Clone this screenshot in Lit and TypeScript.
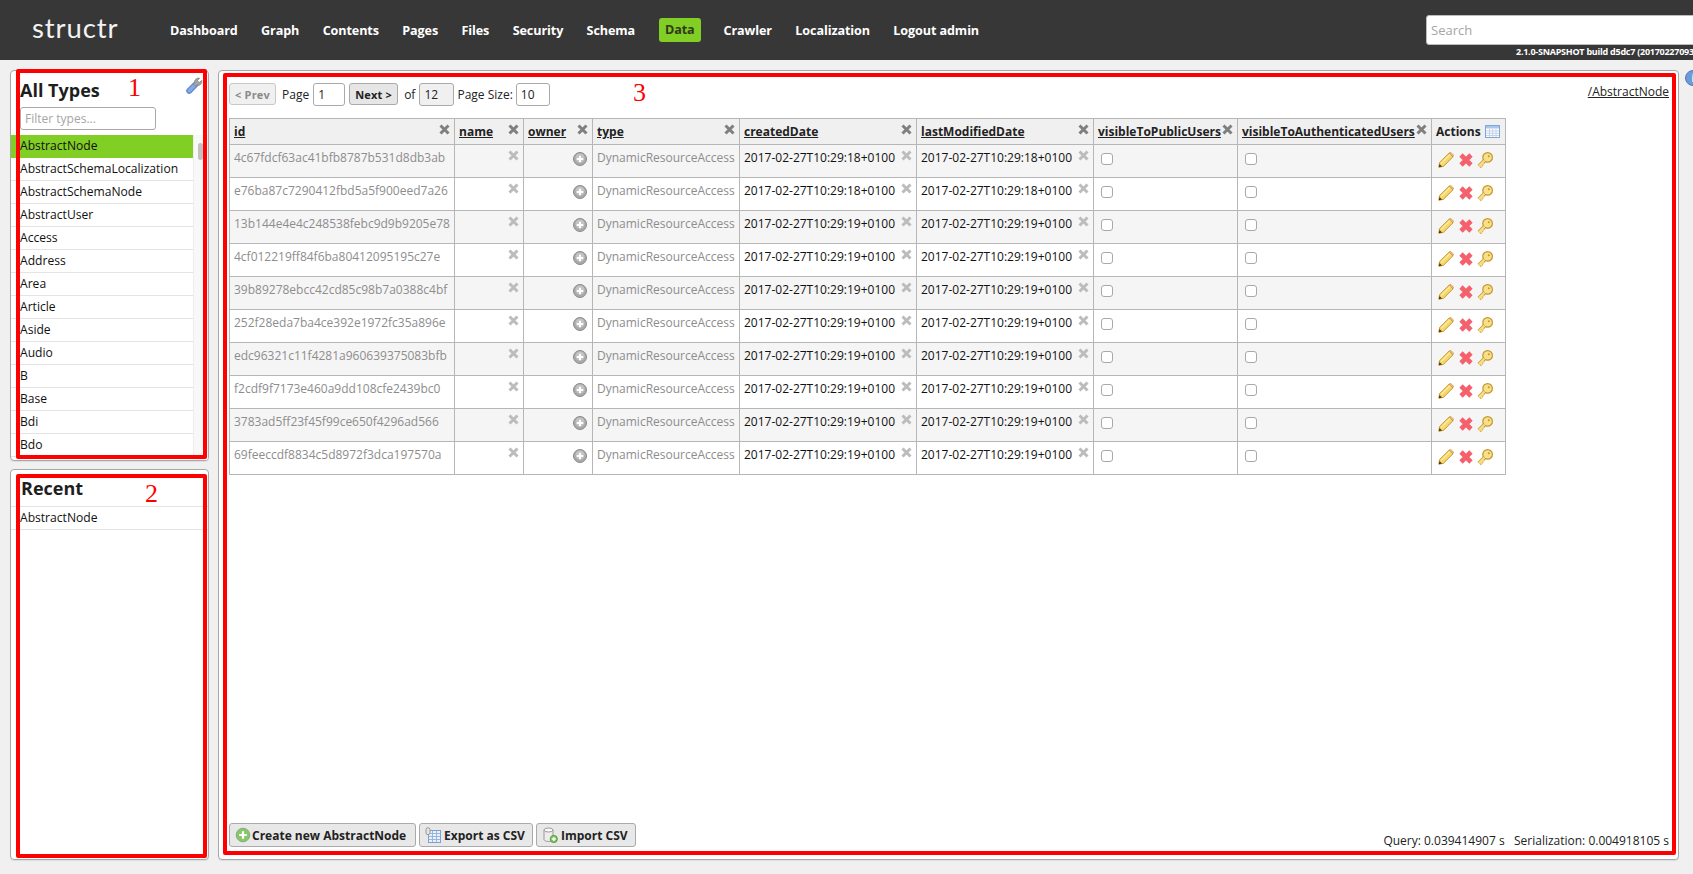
import { LitElement, html, css } from "lit";
import { customElement } from "lit/decorators.js";

const NAV = ["Dashboard", "Graph", "Contents", "Pages", "Files", "Security", "Schema", "Data", "Crawler", "Localization", "Logout admin"];
const TYPES = ["AbstractNode", "AbstractSchemaLocalization", "AbstractSchemaNode", "AbstractUser", "Access", "Address", "Area", "Article", "Aside", "Audio", "B", "Base", "Bdi", "Bdo"];
const IDS = [
  "4c67fdcf63ac41bfb8787b531d8db3ab",
  "e76ba87c7290412fbd5a5f900eed7a26",
  "13b144e4e4c248538febc9d9b9205e78",
  "4cf012219ff84f6ba80412095195c27e",
  "39b89278ebcc42cd85c98b7a0388c4bf",
  "252f28eda7ba4ce392e1972fc35a896e",
  "edc96321c11f4281a960639375083bfb",
  "f2cdf9f7173e460a9dd108cfe2439bc0",
  "3783ad5ff23f45f99ce650f4296ad566",
  "69feeccdf8834c5d8972f3dca197570a",
];
const COLS: [string, number][] = [
  ["id", 225], ["name", 69], ["owner", 69], ["type", 147], ["createdDate", 177],
  ["lastModifiedDate", 177], ["visibleToPublicUsers", 144], ["visibleToAuthenticatedUsers", 194],
];

const xIcon = (cls: string) => html`<svg class="x ${cls}" viewBox="0 0 11 11"><path d="M1.5 1.5 9.5 9.5M9.5 1.5 1.5 9.5" fill="none" stroke="currentColor" stroke-width="3"/></svg>`;
const plusIcon = html`<svg class="plus" viewBox="0 0 14 14"><circle cx="7" cy="7" r="6.5" fill="#a9a9a9" stroke="#8c8c8c"/><circle cx="7" cy="6" r="4.5" fill="#c4c4c4"/><path d="M7 3.8v6.4M3.8 7h6.4" stroke="#fff" stroke-width="2"/></svg>`;
const pencil = html`<svg class="ic16" viewBox="0 0 16 16"><path d="M.8 15.2 1.6 10.6 11.2 1 15 4.8 5.4 14.4Z" fill="#f6d768" stroke="#c18f2c" stroke-width=".9"/><path d="M3.2 11.4 12.4 2.4" stroke="#fdf0b0" stroke-width="1.1"/><path d="M11.2 1 12.8.4 15.6 3.2 15 4.8Z" fill="#f0b98d" stroke="#c18f2c" stroke-width=".6"/><path d="M.8 15.2 1.5 12 4 14.5Z" fill="#4d3418"/></svg>`;
const cross = html`<svg class="ic14" viewBox="0 0 14 14"><path d="M2 2 12 12M12 2 2 12" stroke="#f4606b" stroke-width="4.6"/></svg>`;
const key = html`<svg class="ic16" viewBox="0 0 16 16"><g fill="none"><path d="M7.5 8.5 1.8 14.2M3.2 12.8 5.2 14.8M5 11 6.6 12.6" stroke="#c6952c" stroke-width="3.6"/><circle cx="10.6" cy="5.4" r="4.2" fill="#c6952c" stroke="#c6952c" stroke-width="2.4"/><path d="M7.5 8.5 1.8 14.2M3.2 12.8 5.2 14.8M5 11 6.6 12.6" stroke="#f8e08a" stroke-width="2"/><circle cx="10.6" cy="5.4" r="4.2" fill="#f8e08a"/><circle cx="11.8" cy="4.2" r="1" fill="#c6952c"/></g></svg>`;
const wrench = html`<svg class="wrench" viewBox="0 0 17 17"><path d="M3.2 13.8 9.5 7.5" stroke="#5f86cc" stroke-width="6" stroke-linecap="round"/><path d="M3.2 13.8 9.5 7.5" stroke="#86a9e6" stroke-width="3.6" stroke-linecap="round"/><path d="M8.5 5.5C8.5 2.5 11 .6 13.6 1.2L11.4 3.6 13.2 5.6 15.8 3.4C16.4 6.4 14 8.8 11.2 8.2L9.6 9.2 7.6 7.2Z" fill="#a4a4a4" stroke="#7d7d7d" stroke-width=".7"/></svg>`;
const tableIcon = html`<svg class="tbl" viewBox="0 0 15 13"><rect x=".5" y=".5" width="14" height="12" fill="#fff" stroke="#7ea6dc"/><rect x="1" y="1" width="13" height="2.5" fill="#a9c6ee"/><path d="M1 6h13M1 8.3h13M1 10.5h13M4.5 4v8M7.7 4v8M11 4v8" stroke="#b9c9e0" stroke-width=".8"/></svg>`;
const createIcon = html`<svg class="btn-ic" viewBox="0 0 16 16"><circle cx="8" cy="8" r="6.8" fill="#85c964" stroke="#8aa883"/><path d="M8 4.2v7.6M4.2 8h7.6" stroke="#fff" stroke-width="2.2"/></svg>`;
const exportIcon = html`<svg class="btn-ic" viewBox="0 0 16 16"><rect x="3.5" y="3.5" width="12" height="12" fill="#eaf1fb" stroke="#7ea0cc"/><path d="M3.5 6.5h12M3.5 9.5h12M3.5 12.5h12M7.5 4v11M11.5 4v11" stroke="#8fb0da" stroke-width=".9"/><rect x="1" y=".7" width="4" height="7" rx="2" fill="#e4e4e4" stroke="#999"/></svg>`;
const importIcon = html`<svg class="btn-ic" viewBox="0 0 16 16"><path d="M2 3v9.5c0 1 2 2 4.5 2s4.5-1 4.5-2V3Z" fill="#ededed" stroke="#999"/><ellipse cx="6.5" cy="3" rx="4.5" ry="2" fill="#fafafa" stroke="#999"/><circle cx="11.8" cy="12" r="3.6" fill="#7cc35a" stroke="#5f9d43"/><path d="M11.8 10v4M9.8 12h4" stroke="#fff" stroke-width="1.3"/></svg>`;

@customElement("app-root")
export class AppRoot extends LitElement {
  static styles = css`
    :host { display: block; position: relative; width: 1693px; height: 874px; overflow: hidden; background: #f0f0f0; font-family: "Open Sans", "DejaVu Sans", sans-serif; font-size: 12px; color: #1a1a1a; }
    * { box-sizing: border-box; }
    header { height: 60px; background: #373737; display: flex; align-items: flex-start; overflow: hidden; }
    .logo { width: 170px; flex: none; padding: 10px 0 0 32px; font-family: Lato, sans-serif; font-weight: 400; font-size: 27.5px; line-height: 36px; letter-spacing: .9px; color: #f2f2f2; }
    nav { display: flex; align-items: center; height: 24px; margin-top: 18px; flex: none; width: 1256px; }
    nav a { font-weight: 700; font-size: 12.6px; color: #fff; margin-right: 23.4px; letter-spacing: -.1px; white-space: nowrap; }
    nav a.active { background: #81ce25; color: #2f3a1c; border-radius: 3px; padding: 0 6.5px; height: 24px; line-height: 24px; margin-right: 22.4px; }
    .search { flex: none; width: 267px; padding-top: 15px; overflow: hidden; }
    .search input { display: block; width: 300px; height: 30px; border: 1px solid #bbb; border-radius: 3px; padding: 0 4px; font: 13px "Open Sans", sans-serif; background: #fff; }
    .search input::placeholder, .filter::placeholder { color: #a5a5a5; opacity: 1; }
    .version { font-size: 9px; font-weight: 700; color: #fff; white-space: nowrap; padding-left: 90px; line-height: 14px; letter-spacing: -.25px; }
    .body { display: flex; height: 814px; padding: 10px 0 0 10px; }
    .side { flex: none; width: 199px; display: flex; flex-direction: column; gap: 8px; height: 790px; }
    .panel { background: #fff; border: 1px solid #a8a8a8; border-radius: 4px; box-shadow: 0 1px 1px rgba(0,0,0,.08); }
    .types { height: 391px; display: flex; flex-direction: column; overflow: hidden; }
    .recent { flex: 1; }
    .types-head { height: 64px; flex: none; position: relative; padding: 0 0 0 9px; }
    h2 { margin: 0; font-weight: 700; font-size: 18px; color: #1e1e1e; line-height: 27px; }
    .types-head h2 { padding-top: 1px; line-height: 26px; height: 36px; display: flex; align-items: center; }
    .wrench { position: absolute; right: 5px; top: 6px; width: 17px; height: 17px; }
    .filter { display: block; width: 136px; height: 23px; border: 1px solid #aaa; border-radius: 3px; padding: 0 4px; font: 12px "Open Sans", sans-serif; background: #fff; }
    .list-wrap { flex: 1; display: flex; min-height: 0; }
    ul { list-style: none; margin: 0; padding: 0; }
    .list-wrap ul { flex: 1; min-width: 0; }
    li { height: 23px; line-height: 22px; padding-left: 9px; border-bottom: 1px solid #e4e4e4; font-size: 12.1px; color: #111; }
    li.active { background: #81ce25; border-bottom-color: #81ce25; }
    .track { width: 15px; flex: none; background: #f8f8f8; border-left: 1px solid #ededed; padding: 8px 0 0 4px; }
    .thumb { width: 5px; height: 17px; background: #c2c2c2; border-radius: 3px; }
    .recent h2 { height: 37px; padding: 5px 0 0 10px; border-bottom: 1px solid #e4e4e4; line-height: 27px; }
    .main { flex: none; width: 1461px; height: 790px; margin-left: 9px; padding: 12px 9px 12px 10px; display: flex; flex-direction: column; }
    .tools { display: flex; align-items: flex-start; height: 23px; margin-bottom: 12px; font-size: 12px; }
    .tools span { line-height: 23px; color: #222; }
    .tools .path { margin-left: auto; text-decoration: underline; color: #222; font-size: 12px; line-height: 18px; }
    .pbtn { height: 22px; border: 1px solid #aaa; border-radius: 3px; background: #e6e6e6; font: 700 11px "Open Sans", sans-serif; color: #222; padding: 0; letter-spacing: .2px; }
    .pbtn.prev { width: 47px; color: #8a8a8a; background: #f0f0f0; border-color: #c8c8c8; margin-right: 6px; }
    .pbtn.next { width: 49px; margin: 0 6px 0 4px; }
    .pinput { height: 23px; border: 1px solid #aaa; border-radius: 3px; padding: 0 4px; font: 12px "Open Sans", sans-serif; color: #222; background: #fff; }
    .p1 { width: 32px; margin-left: 4px; }
    .p2 { width: 35px; margin: 0 3px 0 4px; background: #f0f0f0; }
    .p3 { width: 34px; margin-left: 3px; }
    table { border-collapse: collapse; table-layout: fixed; width: 1276px; }
    th, td { border: 1px solid #b6b6b6; position: relative; padding: 0; }
    th { height: 26px; background: #f0f0f0; text-align: left; padding: 0 4px 0 4px; font-size: 12px; font-weight: 700; color: #222; white-space: nowrap; overflow: visible; }
    th u { text-underline-offset: 1px; }
    td { height: 33px; vertical-align: top; padding: 4px 0 0 4px; line-height: 18px; color: #8d8d8d; font-size: 12px; white-space: nowrap; overflow: hidden; }
    tr.odd td { background: #f5f5f5; }
    td.dark { color: #111; }
    .x { position: absolute; width: 11px; height: 11px; right: 4px; }
    .x.h { top: 5px; color: #7f7f7f; }
    .x.b { top: 5px; color: #bcbcbc; }
    .plus { position: absolute; right: 5px; top: 7px; width: 14px; height: 14px; }
    td .cb { appearance: none; -webkit-appearance: none; display: block; margin: 4px 0 0 3px; width: 12px; height: 12px; border: 1px solid #a9a9a9; border-radius: 3px; background: #fff; }
    .acts { display: flex; align-items: center; gap: 5px; padding: 3px 0 0 2px; }
    .ic16 { width: 16px; height: 16px; flex: none; }
    .ic14 { width: 14px; height: 14px; flex: none; margin-right: -1px; }
    th.act { padding-right: 0; }
    .act-in { display: flex; align-items: center; gap: 4px; }
    .tbl { width: 15px; height: 13px; flex: none; }
    .foot { margin-top: auto; display: flex; align-items: flex-end; gap: 3px; }
    .btn { height: 24px; border: 1px solid #aaa; border-radius: 3px; background: #e8e8e8; display: flex; align-items: center; gap: 3px; padding: 0 0 0 5px; font: 700 12px "Open Sans", sans-serif; color: #222; white-space: nowrap; flex: none; }
    .b1 { width: 187px; gap: 1px; } .b2 { width: 114px; } .b3 { width: 100px; }
    .btn-ic { width: 16px; height: 16px; flex: none; }
    .stats { margin-left: auto; margin-bottom: -3px; font-size: 12px; color: #222; white-space: pre; line-height: 18px; }
    .info { flex: none; margin-left: 6px; width: 16px; height: 16px; border-radius: 50%; background: #6b9bd8; border: 1px solid #4c7cb9; color: #fff; font-size: 10px; font-weight: 700; text-align: center; line-height: 14px; }
    .mark { position: absolute; border: 4px solid #fe0000; border-radius: 2px; pointer-events: none; }
    .m1 { left: 16px; top: 69px; width: 191px; height: 390px; }
    .m2 { left: 16px; top: 474px; width: 191px; height: 384px; }
    .m3 { left: 223px; top: 73px; width: 1453px; height: 782px; }
    .num { position: absolute; font-family: "Liberation Serif", serif; color: #fe0000; font-size: 26px; line-height: 26px; pointer-events: none; }
    .n1 { left: 128px; top: 75px; }
    .n2 { left: 145px; top: 481px; }
    .n3 { left: 633px; top: 80px; }
  `;

  render() {
    return html`
      <header>
        <div class="logo">structr</div>
        <nav>${NAV.map((n) => html`<a class=${n === "Data" ? "active" : ""}>${n}</a>`)}</nav>
        <div class="search">
          <input placeholder="Search" />
          <div class="version">2.1.0-SNAPSHOT build d5dc7 (201702270932)</div>
        </div>
      </header>
      <div class="body">
        <div class="side">
          <section class="panel types">
            <div class="types-head">
              <h2>All Types</h2>
              ${wrench}
              <input class="filter" placeholder="Filter types..." />
            </div>
            <div class="list-wrap">
              <ul>${TYPES.map((t, i) => html`<li class=${i === 0 ? "active" : ""}>${t}</li>`)}</ul>
              <div class="track"><div class="thumb"></div></div>
            </div>
          </section>
          <section class="panel recent">
            <h2>Recent</h2>
            <ul><li>AbstractNode</li></ul>
          </section>
        </div>
        <main class="panel main">
          <div class="tools">
            <button class="pbtn prev">&lt; Prev</button>
            <span>Page</span>
            <input class="pinput p1" value="1" />
            <button class="pbtn next">Next &gt;</button>
            <span>of</span>
            <input class="pinput p2" value="12" disabled />
            <span>Page Size:</span>
            <input class="pinput p3" value="10" />
            <span class="path">/AbstractNode</span>
          </div>
          <table>
            <colgroup>
              ${COLS.map(([, w]) => html`<col style="width:${w}px" />`)}
              <col style="width:74px" />
            </colgroup>
            <thead>
              <tr>
                ${COLS.map(([c]) => html`<th><u>${c}</u>${xIcon("h")}</th>`)}
                <th class="act"><div class="act-in">Actions ${tableIcon}</div></th>
              </tr>
            </thead>
            <tbody>
              ${IDS.map((id, i) => {
                const d = `2017-02-27T10:29:${i < 2 ? 18 : 19}+0100`;
                return html`<tr class=${i % 2 === 0 ? "odd" : ""}>
                  <td>${id}</td>
                  <td>${xIcon("b")}</td>
                  <td>${plusIcon}</td>
                  <td>DynamicResourceAccess</td>
                  <td class="dark">${d}${xIcon("b")}</td>
                  <td class="dark">${d}${xIcon("b")}</td>
                  <td><input class="cb" type="checkbox" /></td>
                  <td><input class="cb" type="checkbox" /></td>
                  <td><div class="acts">${pencil}${cross}${key}</div></td>
                </tr>`;
              })}
            </tbody>
          </table>
          <div class="foot">
            <button class="btn b1">${createIcon}Create new AbstractNode</button>
            <button class="btn b2">${exportIcon}Export as CSV</button>
            <button class="btn b3">${importIcon}Import CSV</button>
            <div class="stats">Query: 0.039414907 s   Serialization: 0.004918105 s</div>
          </div>
        </main>
        <div class="info">i</div>
      </div>
      <div class="mark m1"></div>
      <div class="mark m2"></div>
      <div class="mark m3"></div>
      <div class="num n1">1</div>
      <div class="num n2">2</div>
      <div class="num n3">3</div>
    `;
  }
}
